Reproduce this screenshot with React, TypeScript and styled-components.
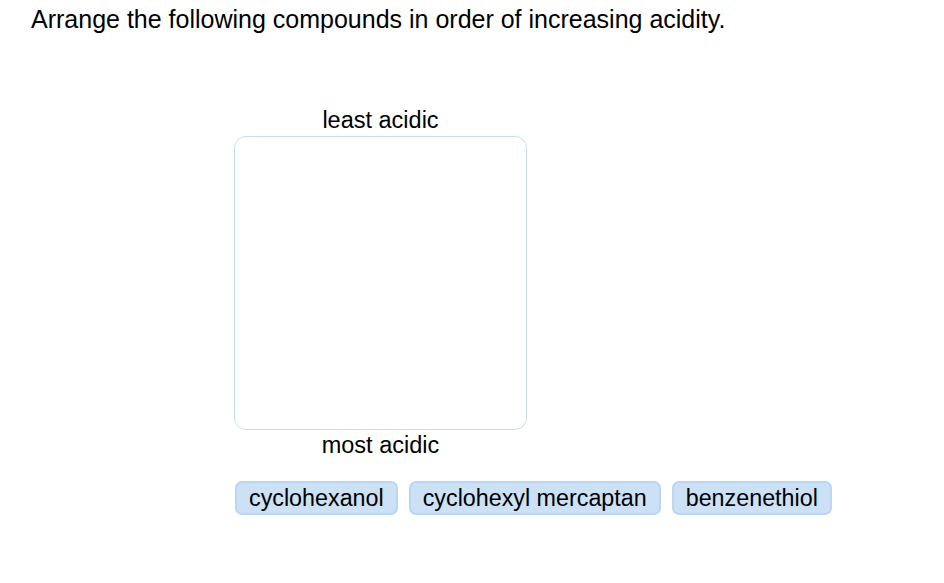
import React from 'react';
import styled, { createGlobalStyle } from 'styled-components';

const GlobalStyle = createGlobalStyle`
  body {
    margin: 0;
    background: #ffffff;
    font-family: "Liberation Sans", Arial, sans-serif;
    color: #000000;
  }
`;

const Page = styled.div`
  width: 944px;
  height: 583px;
  padding: 3px 0 0 31px;
  box-sizing: border-box;
`;

const Prompt = styled.div`
  font-size: 25px;
  line-height: 32px;
`;

const Sorter = styled.div`
  margin: 71px 0 0 203px;
  width: 293px;
  display: flex;
  flex-direction: column;
  align-items: center;
`;

const EndLabel = styled.div`
  font-size: 23.5px;
  line-height: 28px;
  text-align: center;
`;

const DropZone = styled.div`
  width: 293px;
  height: 294px;
  box-sizing: border-box;
  border: 1px solid #c6def2;
  border-radius: 12px;
  margin: 2px 0 1px;
`;

const Tray = styled.div`
  display: flex;
  gap: 11px;
  margin: 22px 0 0 204px;
`;

const Chip = styled.div`
  height: 34px;
  box-sizing: border-box;
  padding: 0 12px;
  display: flex;
  align-items: center;
  font-size: 23.3px;
  background: #cde1f6;
  border: 2px solid #b9d6f2;
  border-radius: 7px;
`;

const compounds = ['cyclohexanol', 'cyclohexyl mercaptan', 'benzenethiol'];

const App: React.FC = () => (
  <>
    <GlobalStyle />
    <Page>
      <Prompt>Arrange the following compounds in order of increasing acidity.</Prompt>
      <Sorter>
        <EndLabel>least acidic</EndLabel>
        <DropZone />
        <EndLabel>most acidic</EndLabel>
      </Sorter>
      <Tray>
        {compounds.map((name) => (
          <Chip key={name}>{name}</Chip>
        ))}
      </Tray>
    </Page>
  </>
);

export default App;
